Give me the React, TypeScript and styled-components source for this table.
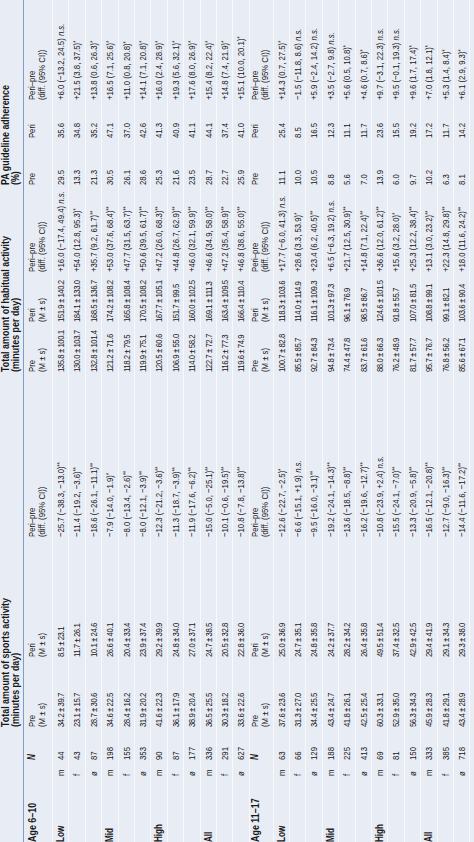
import React from "react";
import styled, { createGlobalStyle } from "styled-components";

// The table is printed sideways: it is laid out normally (842 wide, 474 high)
// and then turned a quarter turn counter-clockwise to fill the portrait page.
const PAGE_W = 474;
const PAGE_H = 842;
const SQUEEZE = 0.81; // narrow type, like the condensed face of the original

// column widths in page pixels, left to right of the unrotated table
const COLS = [66, 16, 33, 70, 120, 165, 50, 50, 87, 47, 38, 100];

const GlobalStyle = createGlobalStyle`
  html, body {
    margin: 0;
    padding: 0;
    background: #ffffff;
  }
  body {
    font-family: "Liberation Sans", Arial, sans-serif;
    color: #1a1718;
  }
`;

const Page = styled.div`
  width: ${PAGE_W}px;
  height: ${PAGE_H}px;
  overflow: hidden;
  background: #e8edf5;
`;

const Sheet = styled.div`
  width: ${PAGE_H / SQUEEZE}px;
  height: ${PAGE_W}px;
  transform-origin: 0 0;
  transform: translateY(${PAGE_H}px) rotate(-90deg) scaleX(${SQUEEZE});
  font-size: 9.6px;
`;

const Row = styled.div<{ $h: number; $pad?: number; $rule?: boolean }>`
  display: grid;
  grid-template-columns: ${COLS.map((w) => `${w / SQUEEZE}px`).join(" ")};
  height: ${(p) => p.$h}px;
  padding-top: ${(p) => p.$pad ?? 0}px;
  box-sizing: border-box;
  border-bottom: ${(p) => (p.$rule ? "1.5px solid #7f9bc6" : "1px solid #f7f9fc")};
`;

const GroupHead = styled.div<{ $span: number }>`
  grid-column: span ${(p) => p.$span};
  font-size: 11px;
  font-weight: 700;
  line-height: 10px;
  white-space: nowrap;
`;

const Blank = styled.div<{ $span?: number }>`
  grid-column: span ${(p) => p.$span ?? 1};
`;

const SectionLabel = styled.div`
  font-size: 11px;
  font-weight: 700;
  line-height: 10px;
  white-space: nowrap;
`;

const SubHead = styled.div<{ $em?: boolean }>`
  line-height: 10px;
  white-space: nowrap;
  font-size: ${(p) => (p.$em ? "10px" : "inherit")};
  font-weight: ${(p) => (p.$em ? 700 : 400)};
  font-style: ${(p) => (p.$em ? "italic" : "normal")};
`;

const Cell = styled.div<{ $mean?: boolean; $group?: boolean }>`
  line-height: 16px;
  white-space: nowrap;
  letter-spacing: ${(p) => (p.$mean ? "-0.55px" : "0")};
  font-size: ${(p) => (p.$group ? "10px" : "inherit")};
  font-weight: ${(p) => (p.$group ? 700 : 400)};
`;

const Stars = styled.sup`
  font-size: 6.5px;
  line-height: 0;
  vertical-align: 2.5px;
`;

const NS = styled.span`
  font-style: italic;
`;

type Line = [string, string, string[]];

const diff = (text: string) => {
  const m = text.match(/^(.*?\))(\*+| n\.s\.)$/);
  if (!m) return text;
  return (
    <>
      {m[1]}
      {m[2] === " n.s." ? (
        <>
          {" "}
          <NS>n.s.</NS>
        </>
      ) : (
        <Stars>{m[2]}</Stars>
      )}
    </>
  );
};

const younger: Line[] = [
  ["Low", "m", ["44", "34.2 ± 39.7", "8.5 ± 23.1", "−25.7 (−38.3, −13.0)**", "135.8 ± 100.1", "151.9 ± 140.2", "+16.0 (−17.4, 49.4) n.s.", "29.5", "35.6", "+6.0 (−13.2, 24.5) n.s."]],
  ["", "f", ["43", "23.1 ± 15.7", "11.7 ± 26.1", "−11.4 (−19.2, −3.6)**", "130.0 ± 103.7", "184.1 ± 133.0", "+54.0 (12.8, 95.3)*", "13.3", "34.8", "+21.5 (3.8, 37.5)*"]],
  ["", "ø", ["87", "28.7 ± 30.6", "10.1 ± 24.6", "−18.6 (−26.1, −11.1)**", "132.8 ± 101.4", "168.5 ± 136.7", "+35.7 (9.2, 61.7)**", "21.3", "35.2", "+13.8 (0.6, 26.3)*"]],
  ["Mid", "m", ["198", "34.6 ± 22.5", "26.6 ± 40.1", "−7.9 (−14.0, −1.9)*", "121.2 ± 71.6", "174.2 ± 108.2", "+53.0 (37.6, 68.4)**", "30.5", "47.1", "+16.5 (7.1, 25.6)*"]],
  ["", "f", ["155", "28.4 ± 16.2", "20.4 ± 33.4", "−8.0 (−13.4, −2.6)**", "118.2 ± 79.5", "165.8 ± 108.4", "+47.7 (31.5, 63.7)**", "26.1", "37.0", "+11.0 (0.8, 20.8)*"]],
  ["", "ø", ["353", "31.9 ± 20.2", "23.9 ± 37.4", "−8.0 (−12.1, −3.9)**", "119.9 ± 75.1", "170.5 ± 108.2", "+50.6 (39.5, 61.7)**", "28.6", "42.6", "+14.1 (7.1, 20.8)*"]],
  ["High", "m", ["90", "41.6 ± 22.3", "29.2 ± 39.9", "−12.3 (−21.2, −3.6)**", "120.5 ± 60.6", "167.7 ± 105.1", "+47.2 (26.0, 68.3)**", "25.3", "41.3", "+16.0 (2.4, 28.9)*"]],
  ["", "f", ["87", "36.1 ± 17.9", "24.8 ± 34.0", "−11.3 (−18.7, −3.9)**", "106.9 ± 55.0", "151.7 ± 99.5", "+44.8 (26.7, 62.9)**", "21.6", "40.9", "+19.3 (5.6, 32.1)*"]],
  ["", "ø", ["177", "38.9 ± 20.4", "27.0 ± 37.1", "−11.9 (−17.6, −6.2)**", "114.0 ± 58.2", "160.0 ± 102.5", "+46.0 (32.1, 59.9)**", "23.5", "41.1", "+17.6 (8.0, 26.9)*"]],
  ["All", "m", ["336", "36.5 ± 25.5", "24.7 ± 38.5", "−15.0 (−5.0, −25.1)**", "122.7 ± 72.7", "169.1 ± 111.3", "+46.6 (34.9, 58.0)**", "28.7", "44.1", "+15.4 (8.2, 22.4)*"]],
  ["", "f", ["291", "30.3 ± 18.2", "20.5 ± 32.8", "−10.1 (−0.6, −19.5)**", "116.2 ± 77.3", "163.4 ± 109.5", "+47.2 (35.4, 58.9)**", "22.7", "37.4", "+14.8 (7.4, 21.9)*"]],
  ["", "ø", ["627", "33.6 ± 22.6", "22.8 ± 36.0", "−10.8 (−7.8, −13.8)**", "119.6 ± 74.9", "166.4 ± 110.4", "+46.8 (38.6, 55.0)**", "25.9", "41.0", "+15.1 (10.0, 20.1)*"]],
];

const older: Line[] = [
  ["Low", "m", ["63", "37.6 ± 23.6", "25.0 ± 36.9", "−12.6 (−22.7, −2.5)*", "100.7 ± 82.8", "118.3 ± 103.6", "+17.7 (−6.0, 41.3) n.s.", "11.1", "25.4", "+14.3 (0.7, 27.5)*"]],
  ["", "f", ["66", "31.3 ± 27.0", "24.7 ± 35.1", "−6.6 (−15.1, +1.9) n.s.", "85.5 ± 85.7", "114.0 ± 114.9", "+28.6 (3.3, 53.9)*", "10.0", "8.5", "−1.5 (−11.8, 8.6) n.s."]],
  ["", "ø", ["129", "34.4 ± 25.5", "24.8 ± 35.8", "−9.5 (−16.0, −3.1)**", "92.7 ± 84.3", "116.1 ± 109.3", "+23.4 (6.2, 40.5)**", "10.5", "16.5", "+5.9 (−2.4, 14.2) n.s."]],
  ["Mid", "m", ["188", "43.4 ± 24.7", "24.2 ± 37.7", "−19.2 (−24.1, −14.3)**", "94.8 ± 73.4", "101.3 ± 97.3", "+6.5 (−6.3, 19.2) n.s.", "8.8", "12.3", "+3.5 (−2.7, 9.8) n.s."]],
  ["", "f", ["225", "41.8 ± 26.1", "28.2 ± 34.2", "−13.6 (−18.5, −8.8)**", "74.4 ± 47.8", "96.1 ± 76.9", "+21.7 (12.5, 30.9)**", "5.6", "11.1", "+5.6 (0.5, 10.8)*"]],
  ["", "ø", ["413", "42.5 ± 25.4", "26.4 ± 35.8", "−16.2 (−19.6, −12.7)**", "83.7 ± 61.6", "98.5 ± 86.7", "+14.8 (7.1, 22.4)**", "7.0", "11.7", "+4.6 (0.7, 8.6)*"]],
  ["High", "m", ["69", "60.3 ± 33.1", "49.5 ± 51.4", "−10.8 (−23.9, +2.4) n.s.", "88.0 ± 66.3", "124.6 ± 101.5", "+36.6 (12.0, 61.2)**", "13.9", "23.6", "+9.7 (−3.1, 22.3) n.s."]],
  ["", "f", ["81", "52.9 ± 35.0", "37.4 ± 32.5", "−15.5 (−24.1, −7.0)**", "76.2 ± 48.9", "91.8 ± 55.7", "+15.6 (3.2, 28.0)*", "6.0", "15.5", "+9.5 (−0.1, 19.3) n.s."]],
  ["", "ø", ["150", "56.3 ± 34.3", "42.9 ± 42.5", "−13.3 (−20.9, −5.8)**", "81.7 ± 57.7", "107.0 ± 81.5", "+25.3 (12.2, 38.4)**", "9.7", "19.2", "+9.6 (1.7, 17.4)*"]],
  ["All", "m", ["333", "45.9 ± 28.3", "29.4 ± 41.9", "−16.5 (−12.1, −20.8)**", "95.7 ± 76.7", "108.8 ± 99.1", "+13.1 (3.0, 23.2)**", "10.2", "17.2", "+7.0 (1.8, 12.1)*"]],
  ["", "f", ["385", "41.8 ± 29.1", "29.1 ± 34.3", "−12.7 (−9.0, −16.3)**", "76.8 ± 56.2", "99.1 ± 82.1", "+22.3 (14.8, 29.8)**", "6.3", "11.7", "+5.3 (1.4, 8.4)*"]],
  ["", "ø", ["718", "43.4 ± 28.9", "29.3 ± 38.0", "−14.4 (−11.6, −17.2)**", "85.6 ± 67.1", "103.6 ± 90.4", "+18.0 (11.6, 24.2)**", "8.1", "14.2", "+6.1 (2.9, 9.3)*"]],
];

const DIFF_COLS = new Set([3, 6, 9]);
const MEAN_COLS = new Set([1, 2, 4, 5]);

const Section = ({ label, rows, first }: { label: string; rows: Line[]; first?: boolean }) => (
  <>
    <Row $h={first ? 29 : 24} $pad={first ? 3 : 0}>
      <SectionLabel>{label}</SectionLabel>
      <Blank />
      <SubHead $em>N</SubHead>
      {[0, 1].map((g) => (
        <React.Fragment key={g}>
          <SubHead>
            Pre
            <br />
            (M ± s)
          </SubHead>
          <SubHead>
            Peri
            <br />
            (M ± s)
          </SubHead>
          <SubHead>
            Peri–pre
            <br />
            (diff. (95% CI))
          </SubHead>
        </React.Fragment>
      ))}
      <SubHead>Pre</SubHead>
      <SubHead>Peri</SubHead>
      <SubHead>
        Peri–pre
        <br />
        (diff. (95% CI))
      </SubHead>
    </Row>
    {rows.map(([group, sex, values], i) => (
      <Row key={i} $h={16.4}>
        <Cell $group>{group}</Cell>
        <Cell>{sex}</Cell>
        {values.map((v, j) => (
          <Cell key={j} $mean={MEAN_COLS.has(j)}>
            {DIFF_COLS.has(j) ? diff(v) : v}
          </Cell>
        ))}
      </Row>
    ))}
  </>
);

export default function App() {
  return (
    <>
      <GlobalStyle />
      <Page>
        <Sheet>
          <Row $h={24} $rule>
            <Blank $span={3} />
            <GroupHead $span={3}>
              Total amount of sports activity
              <br />
              (minutes per day)
            </GroupHead>
            <GroupHead $span={3}>
              Total amount of habitual activity
              <br />
              (minutes per day)
            </GroupHead>
            <GroupHead $span={3}>
              PA guideline adherence
              <br />
              (%)
            </GroupHead>
          </Row>
          <Section label="Age 6–10" rows={younger} first />
          <Section label="Age 11–17" rows={older} />
        </Sheet>
      </Page>
    </>
  );
}
